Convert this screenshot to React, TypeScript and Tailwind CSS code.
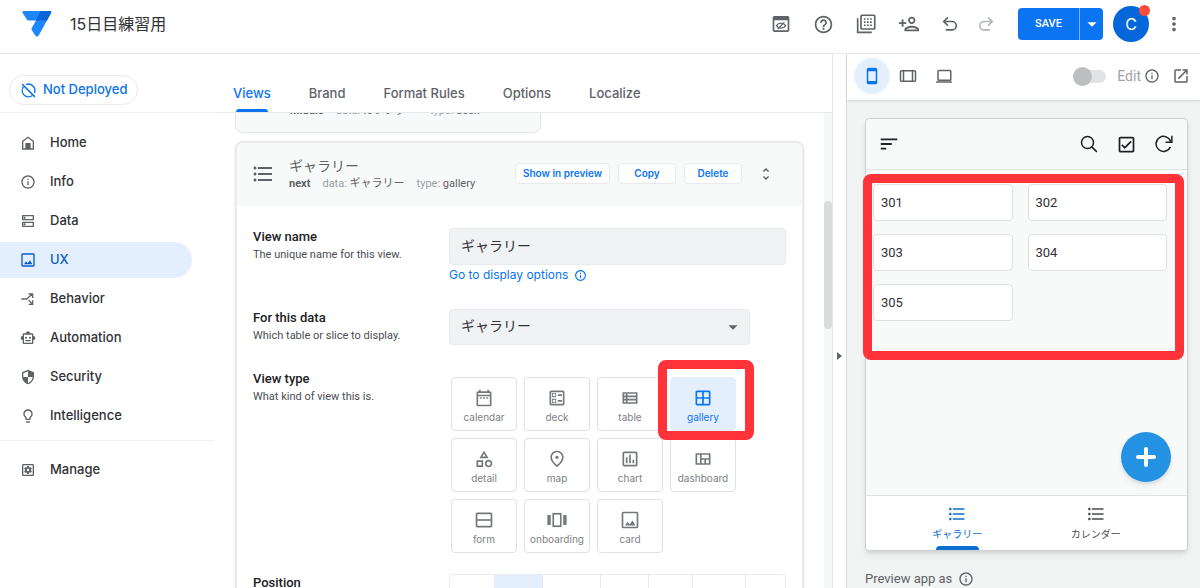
import React from 'react';
import type { IconType } from 'react-icons';
import {
  MdArrowDropDown,
  MdFormatListBulleted,
  MdHelpOutline,
  MdInfoOutline,
  MdLightbulbOutline,
  MdMoreVert,
  MdOpenInNew,
  MdOutlineBallot,
  MdOutlineCategory,
  MdOutlineCheckBox,
  MdOutlineDateRange,
  MdOutlineDns,
  MdOutlineInsertChart,
  MdOutlinePersonAdd,
  MdOutlinePlace,
  MdOutlineSecurity,
  MdOutlineSettingsApplications,
  MdOutlineSmartToy,
  MdOutlineViewList,
  MdOutlineViewQuilt,
  MdOutlineWindow,
  MdSort,
  MdUnfoldMore,
} from 'react-icons/md';

type IconProps = { size?: number; className?: string };
type AnyIcon = IconType | React.FC<IconProps>;

const Svg: React.FC<IconProps & { children: React.ReactNode }> = ({ size = 20, className, children }) => (
  <svg
    width={size}
    height={size}
    viewBox="0 0 24 24"
    fill="none"
    stroke="currentColor"
    strokeWidth={2}
    className={className}
    aria-hidden="true"
  >
    {children}
  </svg>
);

const PreviewOffIcon: React.FC<IconProps> = (props) => (
  <Svg {...props}>
    <rect x="3" y="3.500" width="18" height="17" rx="1" />
    <path d="M3 5.500h18" strokeWidth={4} />
    <path d="M6.500 14c2.500-4 8.500-4 11 0c-2.500 4-8.500 4-11 0z" strokeWidth={1.500} />
    <path d="M8 18l8-8M10.500 15.500l3-3" strokeWidth={1.500} />
  </Svg>
);

const GridStackIcon: React.FC<IconProps> = (props) => (
  <Svg {...props}>
    <rect x="6" y="1.500" width="16.500" height="16.500" rx="1" />
    <path d="M2 5v17h17" />
    <path d="M9.500 6h10.500M9.500 9.750h10.500M9.500 13.500h10.500" strokeDasharray="2 1.750" />
  </Svg>
);

const UndoIcon: React.FC<IconProps> = (props) => (
  <Svg {...props}>
    <path d="M7 19h7.500a5 5 0 0 0 0-10H4.500M9.500 4l-5 5 5 5" />
  </Svg>
);

const PhoneIcon: React.FC<IconProps> = (props) => (
  <Svg {...props}>
    <rect x="6" y="2" width="12" height="20" rx="1.500" />
    <path d="M6 4h12M6 20h12" strokeWidth={3} />
  </Svg>
);

const TabletIcon: React.FC<IconProps> = (props) => (
  <Svg {...props}>
    <rect x="2" y="5" width="20" height="14" rx="1.500" />
    <path d="M6 5v14M18 5v14" />
  </Svg>
);

const LaptopIcon: React.FC<IconProps> = (props) => (
  <Svg {...props}>
    <rect x="4" y="4.500" width="17" height="13" rx="1" />
    <path d="M1.500 20h21" />
  </Svg>
);

const NotDeployedIcon: React.FC<IconProps> = (props) => (
  <Svg {...props}>
    <path d="M3 3l18 18" />
    <path d="M8.500 3.700a9 9 0 0 1 11.800 11.800M17.500 19.100a9 9 0 0 1-12.600-12.600" />
  </Svg>
);

const HouseIcon: React.FC<IconProps> = (props) => (
  <Svg {...props}>
    <path d="M4 21V9.500L12 3.500l8 6V21z" />
    <path d="M9 13h6v7H9z" fill="currentColor" />
  </Svg>
);

const PictureIcon: React.FC<IconProps> = (props) => (
  <Svg {...props}>
    <rect x="3" y="3" width="18" height="18" rx="1" />
    <path d="M6 18.500l3-4.500 2.500 3 3.500-4.500 3.500 6z" fill="currentColor" stroke="none" />
  </Svg>
);

const SplitIcon: React.FC<IconProps> = (props) => (
  <Svg {...props}>
    <path d="M2 12h8l8-7M13 4.500h6v6M13 14l5.500 5.500M13 20h6v-6" />
  </Svg>
);

const FormIcon: React.FC<IconProps> = (props) => (
  <Svg {...props}>
    <rect x="3" y="4" width="18" height="16" rx="1" />
    <path d="M3 12h18" />
  </Svg>
);

const OnboardingIcon: React.FC<IconProps> = (props) => (
  <Svg {...props}>
    <rect x="7.500" y="4.500" width="9" height="15" />
    <path d="M2.500 6v12M21.500 6v12" strokeWidth={4} />
  </Svg>
);

const SearchIcon: React.FC<IconProps> = (props) => (
  <Svg {...props}>
    <circle cx="10" cy="10" r="8" />
    <path d="M15.500 15.500l7 7" />
  </Svg>
);

const SyncIcon: React.FC<IconProps> = (props) => (
  <Svg {...props}>
    <path d="M20.500 16a10 10 0 1 1 .5-7" />
    <path d="M22.500 1v8.500h-8.500" />
  </Svg>
);

const Logo = () => (
  <svg width="30" height="26" viewBox="0 0 30 26" aria-hidden="true">
    <path d="M1.500 0H28q2 0 1 2L17 24q-2 3-4 0l-3-4.500q-1-1.500 0-3L14 9.500H7q-1.500 0-2.500-1.500L.6 2Q0 0 1.500 0z" fill="#1f87fc" />
    <path d="M18.500 0H28q2 0 1 2l-4 7.500H14z" fill="#0b66d8" />
  </svg>
);

const NAV_ITEMS: { label: string; icon: AnyIcon }[] = [
  { label: 'Home', icon: HouseIcon },
  { label: 'Info', icon: MdInfoOutline },
  { label: 'Data', icon: MdOutlineDns },
  { label: 'UX', icon: PictureIcon },
  { label: 'Behavior', icon: SplitIcon },
  { label: 'Automation', icon: MdOutlineSmartToy },
  { label: 'Security', icon: MdOutlineSecurity },
  { label: 'Intelligence', icon: MdLightbulbOutline },
];

const TABS = ['Views', 'Brand', 'Format Rules', 'Options', 'Localize'];

const VIEW_TYPES: { label: string; icon: AnyIcon }[] = [
  { label: 'calendar', icon: MdOutlineDateRange },
  { label: 'deck', icon: MdOutlineBallot },
  { label: 'table', icon: MdOutlineViewList },
  { label: 'gallery', icon: MdOutlineWindow },
  { label: 'detail', icon: MdOutlineCategory },
  { label: 'map', icon: MdOutlinePlace },
  { label: 'chart', icon: MdOutlineInsertChart },
  { label: 'dashboard', icon: MdOutlineViewQuilt },
  { label: 'form', icon: FormIcon },
  { label: 'onboarding', icon: OnboardingIcon },
  { label: 'card', icon: PictureIcon },
];

const POSITIONS = ['first', 'next', 'middle', 'later', 'last', 'menu', 'ref'];
const ROOMS = ['301', '302', '303', '304', '305'];

const Header = () => (
  <header className="flex h-[54px] shrink-0 items-center border-b border-[#e8eaed] pr-[15px] pb-[5px] pl-[22px] text-[#5f6368]">
    <Logo />
    <h1 className="ml-[18px] text-base text-[#303236]">15日目練習用</h1>
    <div className="ml-auto flex items-center gap-[22px]">
      <button aria-label="Preview off"><PreviewOffIcon /></button>
      <button aria-label="Help"><MdHelpOutline size={21} /></button>
      <button aria-label="Gallery"><GridStackIcon /></button>
      <button aria-label="Share"><MdOutlinePersonAdd size={22} /></button>
    </div>
    <div className="ml-5 flex items-center gap-4">
      <button aria-label="Undo"><UndoIcon /></button>
      <button aria-label="Redo" className="text-[#b4b7ba]"><UndoIcon className="-scale-x-100" /></button>
    </div>
    <div className="ml-[22px] flex h-8 items-stretch overflow-hidden rounded-sm bg-[#0b74f2] text-white">
      <button className="flex w-[61px] items-center justify-center text-[11px] leading-4 font-medium font-['Roboto',sans-serif]">
        SAVE
      </button>
      <button aria-label="More save options" className="flex w-6 items-center justify-center border-l border-[#7db6fa]">
        <MdArrowDropDown size={22} />
      </button>
    </div>
    <div className="relative ml-[10px]">
      <button className="block size-9 rounded-full bg-[#0567d9] text-base text-white">C</button>
      <span className="absolute -top-[1px] -right-[1px] size-[11px] rounded-full bg-[#ff4a3d]" />
    </div>
    <button aria-label="More" className="ml-[14px]"><MdMoreVert size={22} /></button>
  </header>
);

const Sidebar = () => (
  <aside className="flex w-[214px] shrink-0 flex-col">
    <div className="flex h-[59px] shrink-0 items-end border-b border-[#f0f1f2] pb-[7px] pl-[9px]">
      <button className="flex h-[30px] items-center gap-[6px] rounded-full border border-[#e8eaed] pr-[10px] pl-[10px] text-[13px] font-medium text-[#0b74e8]">
        <NotDeployedIcon size={17} />
        Not Deployed
      </button>
    </div>
    <nav className="flex flex-col gap-[3px] pt-3 text-[13px] font-medium">
      {NAV_ITEMS.map(({ label, icon: Icon }) => (
        <a
          key={label}
          href="#"
          className={`mr-[22px] flex h-9 items-center gap-[14px] rounded-r-full pl-5 ${
            label === 'UX' ? 'bg-[#e4effd] text-[#0b5cc4]' : 'text-[#303236]'
          }`}
        >
          <Icon size={16} className={label === 'UX' ? '' : 'text-[#5f6368]'} />
          {label}
        </a>
      ))}
      <hr className="mt-[3px] mb-2 border-[#eeeff0]" />
      <a href="#" className="flex h-9 items-center gap-[14px] pl-5 text-[#303236]">
        <MdOutlineSettingsApplications size={16} className="text-[#5f6368]" />
        Manage
      </a>
    </nav>
  </aside>
);

const ViewMeta: React.FC<{ position: string; data: string; type: string }> = ({ position, data, type }) => (
  <p className="flex gap-3 text-[11px] leading-4 text-[#5f6368]">
    <strong className="font-bold">{position}</strong>
    <span><span className="text-[#9aa0a6]">data:</span> {data}</span>
    <span><span className="text-[#9aa0a6]">type:</span> {type}</span>
  </p>
);

const FieldLabel: React.FC<{ title: string; hint?: string; htmlFor?: string }> = ({ title, hint, htmlFor }) => (
  <div className="w-[196px] shrink-0 font-['Roboto',sans-serif]">
    <label htmlFor={htmlFor} className="block text-[13px] leading-[18px] font-medium text-[#202124]">{title}</label>
    {hint && <p className="text-[11px] leading-[18px] text-[#4a4d51]">{hint}</p>}
  </div>
);

const ViewEditor = () => (
  <section className="mt-2 mr-5 rounded-lg border-2 border-[#e8eaeb] bg-white shadow-sm">
    <div className="flex h-[63px] items-center rounded-t-md bg-[#f8f9f9] pr-7 pb-[2px] pl-[14px]">
      <MdFormatListBulleted size={24} className="text-[#5f6368]" />
      <div className="ml-[14px] font-['Roboto','Noto_Sans_CJK_JP',sans-serif]">
        <h2 className="text-sm leading-5 text-[#5f6368]">ギャラリー</h2>
        <ViewMeta position="next" data="ギャラリー" type="gallery" />
      </div>
      <div className="ml-auto flex gap-2 text-[10px] font-semibold text-[#0b74f2]">
        <button className="h-[21px] w-[95px] rounded-sm border border-[#e8eaed] bg-white">Show in preview</button>
        <button className="h-[21px] w-[58px] rounded-sm border border-[#e8eaed] bg-white">Copy</button>
        <button className="h-[21px] w-[58px] rounded-sm border border-[#e8eaed] bg-white">Delete</button>
      </div>
      <button aria-label="Collapse" className="ml-4 text-[#5f6368]"><MdUnfoldMore size={16} /></button>
    </div>

    <div className="pt-[22px] pr-4 pl-4">
      <div className="flex">
        <FieldLabel title="View name" hint="The unique name for this view." htmlFor="view-name" />
        <div className="min-w-0 grow">
          <input
            id="view-name"
            defaultValue="ギャラリー"
            className="block h-[37px] w-full rounded-sm border border-[#e8eaed] bg-[#f1f2f3] px-[11px] pb-1 text-sm text-[#303236]"
          />
          <a href="#" className="flex h-5 items-center gap-[6px] text-xs text-[#0b74f2]">
            Go to display options <MdInfoOutline size={13} />
          </a>
        </div>
      </div>

      <div className="mt-6 flex">
        <FieldLabel title="For this data" hint="Which table or slice to display." htmlFor="view-data" />
        <div className="relative w-[301px]">
          <select
            id="view-data"
            className="h-9 w-full appearance-none rounded-sm border border-[#e8eaed] bg-[#f1f2f3] px-[11px] pb-[2px] text-sm text-[#303236]"
          >
            <option>ギャラリー</option>
          </select>
          <MdArrowDropDown size={22} className="pointer-events-none absolute top-[7px] right-[6px] text-[#5f6368]" />
        </div>
      </div>

      <div className="mt-[25px] flex">
        <FieldLabel title="View type" hint="What kind of view this is." />
        <div className="grid grid-cols-[repeat(4,66px)] gap-[7px] pt-[7px] pl-[2px]">
          {VIEW_TYPES.map(({ label, icon: Icon }) => {
            const selected = label === 'gallery';
            return (
              <div key={label} className="relative">
                <button
                  className={`flex h-[54px] w-full flex-col items-center justify-center gap-[1px] rounded-sm border pt-1 text-[10px] leading-4 ${
                    selected ? 'border-[#e4effd] bg-[#e4effd] text-[#0b74f2]' : 'border-[#dfe1e3] text-[#7d8186]'
                  }`}
                >
                  <Icon size={20} className={selected ? '' : 'text-[#74787d]'} />
                  {label}
                </button>
                {selected && (
                  <span className="pointer-events-none absolute -top-[17px] -left-3 z-10 h-20 w-24 rounded-lg border-[9px] border-[#ff3338]" />
                )}
              </div>
            );
          })}
        </div>
      </div>

      <div className="mt-[21px] flex">
        <FieldLabel title="Position" />
        <div className="flex h-9 grow rounded-sm border border-[#e8eaed] text-[10px] text-[#7d8186]">
          {POSITIONS.map((position) => (
            <button
              key={position}
              className={`grow border-r border-[#e8eaed] px-2 last:border-r-0 ${
                position === 'next' ? 'bg-[#e4effd] text-[#0b74f2]' : ''
              }`}
            >
              {position}
            </button>
          ))}
        </div>
      </div>
    </div>
  </section>
);

const Editor = () => (
  <main className="flex min-w-0 grow flex-col border-r border-[#e3e5e7]">
    <div className="flex h-[59px] shrink-0 gap-[38px] border-b border-[#e8eaed] pl-[19px] text-[13px] text-[#5f6368]">
      {TABS.map((tab) => (
        <a key={tab} href="#" className={`flex flex-col items-center pt-[30px] leading-[18px] font-medium ${tab === 'Views' ? 'text-[#0b74f2]' : ''}`}>
          {tab}
          {tab === 'Views' && <span className="mt-auto h-[3px] w-8 rounded-t-sm bg-[#0b74f2]" />}
        </a>
      ))}
    </div>
    <div className="flex min-h-0 grow">
      <div className="min-w-0 grow overflow-hidden pl-[21px]">
        <div className="-mt-[13px] h-[33px] w-[306px] rounded-b-lg border border-[#e3e5e7] bg-[#f8f9f9] pt-[2px] pl-[54px] font-['Roboto','Noto_Sans_CJK_JP',sans-serif]">
          <ViewMeta position="middle" data="カレンダー" type="deck" />
        </div>
        <ViewEditor />
      </div>
      <div className="w-2 shrink-0 bg-[#f6f7f7] pt-[88px]">
        <div className="h-32 rounded-full bg-[#d9dbdd]" />
      </div>
    </div>
  </main>
);

const PhonePreview = () => (
  <div className="relative mt-[18px] mr-3 ml-[18px] flex grow flex-col rounded-sm border border-[#cfd2d4] bg-[#f8f9f9] shadow-md">
    <div className="flex h-[51px] shrink-0 items-center gap-[18px] border-b border-[#dfe1e3] pr-[14px] pl-3 text-[#202124]">
      <button aria-label="Menu" className="mr-auto"><MdSort size={22} /></button>
      <button aria-label="Search"><SearchIcon size={18} /></button>
      <button aria-label="Select"><MdOutlineCheckBox size={21} /></button>
      <button aria-label="Sync"><SyncIcon size={18} /></button>
    </div>
    <div className="grid grid-cols-2 gap-x-[15px] gap-y-[13px] pt-[14px] pr-5 pl-[7px] font-['Roboto',sans-serif]">
      {ROOMS.map((room) => (
        <a key={room} href="#" className="flex h-[37px] items-center rounded-sm border border-[#dfe1e3] bg-white pl-[7px] text-[13px] text-[#303236]">
          {room}
        </a>
      ))}
    </div>
    <span className="pointer-events-none absolute top-[55px] right-[3px] -left-[3px] h-[186px] rounded-lg border-[9px] border-[#ff3338]" />
    <button aria-label="Add" className="absolute right-4 bottom-[68px] flex size-[50px] items-center justify-center rounded-full bg-[#2492e3] text-white shadow-md">
      <svg width="20" height="20" viewBox="0 0 20 20" stroke="currentColor" strokeWidth="4" strokeLinecap="round" aria-hidden="true">
        <path d="M10 2v16M2 10h16" />
      </svg>
    </button>
    <div className="mt-auto flex h-[55px] shrink-0 rounded-b-sm border-t border-[#dfe1e3] bg-white px-[22px] text-[10px] leading-4">
      <a href="#" className="flex flex-1 flex-col items-center pt-2 text-[#0b6fd0]">
        <MdFormatListBulleted size={20} />
        <span className="mt-[2px]">ギャラリー</span>
        <span className="mt-auto h-1 w-[43px] rounded-t-sm bg-[#0b6fd0]" />
      </a>
      <a href="#" className="flex flex-1 flex-col items-center pt-2 text-[#4a4d51]">
        <MdFormatListBulleted size={20} />
        <span className="mt-[2px]">カレンダー</span>
      </a>
    </div>
  </div>
);

const PreviewPane = () => (
  <section className="flex w-[354px] shrink-0 flex-col border-l border-[#dadcde] bg-[#f2f3f3]">
    <div className="z-10 flex h-[46px] shrink-0 items-center bg-white pr-[10px] pb-[2px] pl-[7px] text-[#5f6368] shadow-sm">
      <button aria-label="Phone" className="flex size-9 items-center justify-center rounded-full bg-[#e4effd] text-[#0b74f2]">
        <PhoneIcon size={18} />
      </button>
      <button aria-label="Tablet" className="ml-[9px]"><TabletIcon size={18} /></button>
      <button aria-label="Desktop" className="ml-[18px]"><LaptopIcon size={18} /></button>
      <label className="ml-auto flex items-center font-['Roboto',sans-serif] text-sm text-[#9fa3a7]">
        <input type="checkbox" role="switch" className="peer sr-only" />
        <span className="mr-[11px] flex h-[13px] w-[33px] items-center rounded-full bg-[#e2e3e4]">
          <span className="size-[19px] shrink-0 rounded-full bg-[#bcbec0]" />
        </span>
        Edit
      </label>
      <MdInfoOutline size={16} className="ml-[3px]" />
      <button aria-label="Open in new tab" className="ml-3"><MdOpenInNew size={18} /></button>
    </div>
    <PhonePreview />
    <div className="flex h-[37px] shrink-0 items-center gap-[6px] pt-[18px] pl-[18px] font-['Roboto',sans-serif] text-[13px] leading-[18px] text-[#5f6368]">
      Preview app as
      <MdInfoOutline size={16} />
    </div>
  </section>
);

export default function App() {
  return (
    <div className="flex h-screen flex-col overflow-hidden bg-white font-['Inter','Noto_Sans_CJK_JP',sans-serif]">
      <Header />
      <div className="flex min-h-0 grow">
        <Sidebar />
        <Editor />
        <button aria-label="Collapse preview" className="flex w-[13px] shrink-0 items-center justify-center pt-[70px]">
          <svg width="5" height="8" viewBox="0 0 5 8" fill="#5f6368" aria-hidden="true">
            <path d="M0 0l5 4-5 4z" />
          </svg>
        </button>
        <PreviewPane />
      </div>
    </div>
  );
}
